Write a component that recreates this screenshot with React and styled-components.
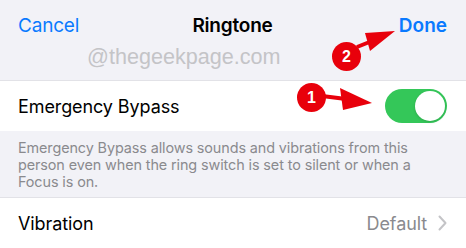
import React from "react";
import styled, { createGlobalStyle } from "styled-components";

const Global = createGlobalStyle`
  html, body { margin: 0; padding: 0; }
  body {
    width: 466px;
    height: 248px;
    overflow: hidden;
    background: #f2f2f7;
    font-family: "Inter", "Liberation Sans", sans-serif;
    -webkit-font-smoothing: antialiased;
  }
`;

const Page = styled.div`
  position: relative;
  width: 466px;
  height: 248px;
  overflow: hidden;
  background: #f2f2f7;
  display: flex;
  flex-direction: column;
`;

const Header = styled.header`
  position: relative;
  height: 80px;
  flex: none;
`;

const NavRow = styled.div`
  height: 50px;
  padding: 0 19px 0 18px;
  display: grid;
  grid-template-columns: 1fr auto 1fr;
  align-items: center;
`;

const NavButton = styled.span`
  color: #0a7aff;
  font-size: 19px;
  font-weight: ${(p) => (p.$bold ? 600 : 400)};
  justify-self: ${(p) => (p.$end ? "end" : "start")};
  letter-spacing: ${(p) => (p.$bold ? "0" : "-0.2px")};
`;

const Title = styled.span`
  color: #000;
  font-size: 19px;
  font-weight: 600;
  letter-spacing: -0.2px;
`;

const Watermark = styled.div`
  position: absolute;
  left: 87px;
  top: 44px;
  font-family: "Liberation Sans", Arial, sans-serif;
  font-size: 21.6px;
  color: #c4c4c7;
`;

const Cell = styled.div`
  flex: none;
  height: 50px;
  background: #fff;
  border-top: 1px solid #e2e2e7;
  padding: 0 19px 0 18px;
  display: flex;
  align-items: center;
  justify-content: space-between;
`;

const Label = styled.span`
  font-size: 18px;
  color: #000;
  letter-spacing: -0.1px;
`;

const Footer = styled.p`
  margin: 0;
  flex: none;
  height: 66px;
  box-sizing: border-box;
  padding: 8px 18px 0 18px;
  font-size: 14.4px;
  line-height: 17px;
  color: #8a8a8e;
  letter-spacing: -0.1px;
`;

const Track = styled.div`
  width: 62px;
  height: 34px;
  border-radius: 17px;
  background: #34c759;
  display: flex;
  align-items: center;
  justify-content: flex-end;
  padding: 0 2px;
  box-sizing: border-box;
`;

const Knob = styled.div`
  width: 30px;
  height: 30px;
  border-radius: 50%;
  background: #fff;
  box-shadow: 0 1px 3px rgba(0, 0, 0, 0.15);
`;

const Value = styled.span`
  display: flex;
  align-items: center;
  gap: 11px;
  font-size: 18px;
  color: #8a8a8e;
  letter-spacing: -0.1px;
`;

const Badge = styled.div`
  position: absolute;
  left: ${(p) => p.$x}px;
  top: ${(p) => p.$y}px;
  width: 29px;
  height: 29px;
  border-radius: 50%;
  background: #e8000b;
  color: #fff;
  font-family: "Liberation Sans", Arial, sans-serif;
  font-weight: 700;
  font-size: 16px;
  display: flex;
  align-items: center;
  justify-content: center;
`;

const Arrows = styled.svg`
  position: absolute;
  left: 0;
  top: 0;
  pointer-events: none;
`;

export default function App() {
  return (
    <Page>
      <Global />
      <Header>
        <NavRow>
          <NavButton>Cancel</NavButton>
          <Title>Ringtone</Title>
          <NavButton $bold $end>Done</NavButton>
        </NavRow>
        <Watermark>@thegeekpage.com</Watermark>
      </Header>
      <Cell>
        <Label>Emergency Bypass</Label>
        <Track>
          <Knob />
        </Track>
      </Cell>
      <Footer>
        Emergency Bypass allows sounds and vibrations from this
        <br />
        person even when the ring switch is set to silent or when a
        <br />
        Focus is on.
      </Footer>
      <Cell>
        <Label>Vibration</Label>
        <Value>
          Default
          <svg width="9" height="16" viewBox="0 0 9 16">
            <path d="M1.5 1.5 L7.5 8 L1.5 14.5" fill="none" stroke="#c4c4c7" strokeWidth="2" strokeLinecap="round" strokeLinejoin="round" />
          </svg>
        </Value>
      </Cell>

      <Arrows width="466" height="248" viewBox="0 0 466 248">
        <line x1="322" y1="96" x2="346" y2="99" stroke="#e8000b" strokeWidth="4" />
        <polygon points="340,88 372,103 343,110" fill="#e8000b" />
        <line x1="357" y1="47" x2="372" y2="41" stroke="#e8000b" strokeWidth="4" />
        <polygon points="365,33 395,31 370,51" fill="#e8000b" />
      </Arrows>
      <Badge $x={297} $y={83}>1</Badge>
      <Badge $x={332} $y={42}>2</Badge>
    </Page>
  );
}
